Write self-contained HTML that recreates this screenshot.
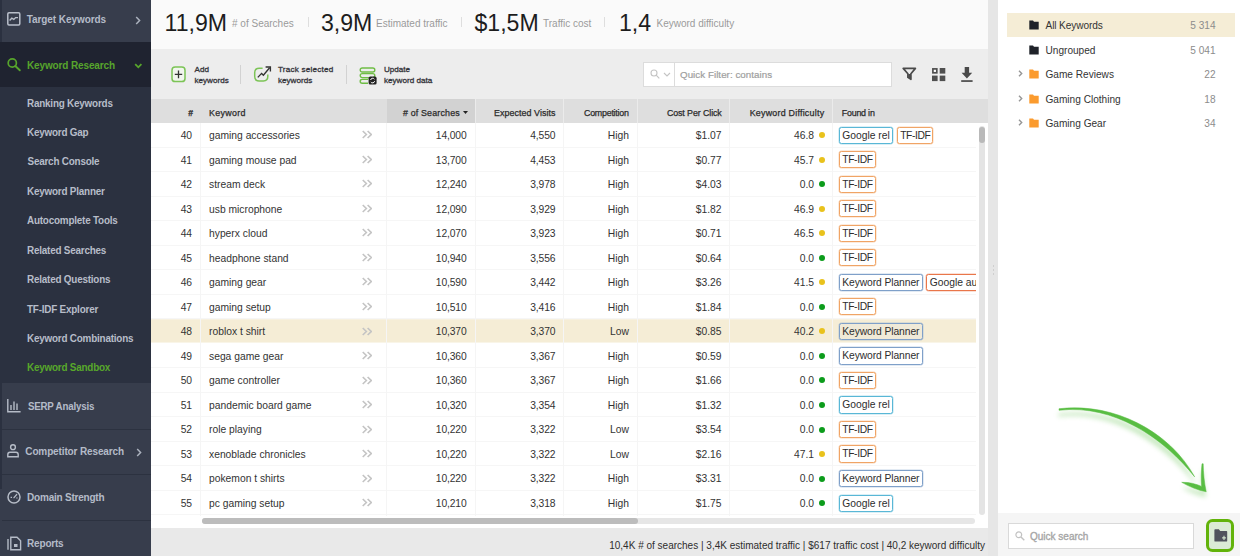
<!DOCTYPE html>
<html lang="en">
<head>
<meta charset="utf-8">
<title>Keyword Sandbox</title>
<style>
*{box-sizing:border-box;margin:0;padding:0}
html,body{width:1240px;height:556px;overflow:hidden;background:#fff}
body{font-family:"Liberation Sans",sans-serif;position:relative;color:#333}
.abs{position:absolute}
/* ---------- sidebar ---------- */
#side{position:absolute;left:0;top:0;width:151px;height:556px;background:#2b3140;overflow:hidden}
.top{position:absolute;left:0;width:151px;height:45.7px;background:#373d4c;border-left:2px solid #2b3140}
.top.line{border-top:1px solid #2c3240}
.top .lbl{position:absolute;top:50%;transform:translateY(-50%) scaleY(1.13);margin-top:-0.6px;font-weight:bold;font-size:10px;color:#b4bbc8;white-space:nowrap;letter-spacing:-0.16px}
.top.act{background:#1f2330;border-left-color:#1f2330;height:44.9px}
.top.act .lbl{color:#57a52c}
.top svg{position:absolute}
.sub{position:absolute;left:27px;font-weight:bold;font-size:9.9px;color:#b7bdc9;white-space:nowrap;transform:translateY(-50%) scaleY(1.13);margin-top:-0.2px;letter-spacing:-0.2px}
.sub.on{color:#58a82b}
/* ---------- main ---------- */
#stats{position:absolute;left:151px;top:0;width:837px;height:49px;background:#fafafa}
.big{position:absolute;top:10.1px;font-size:23.1px;color:#1d1d1d;white-space:nowrap;line-height:26px}
.sm{position:absolute;top:17.9px;font-size:10px;color:#9a9a9a;white-space:nowrap;line-height:12px}
.vs{position:absolute;top:17px;width:1px;height:10px;background:#dedede}
#tool{position:absolute;left:151px;top:49px;width:837px;height:50px;background:#ededed}
.tl{position:absolute;font-size:8.1px;line-height:11.3px;color:#34343a;white-space:nowrap;top:14.9px;-webkit-text-stroke:0.3px #34343a}
.tsep{position:absolute;top:16px;width:1px;height:19px;background:#d2d2d2}
#filter{position:absolute;left:492px;top:13px;width:248.6px;height:25px;background:#fff;border:1px solid #dcdcdc}
#filter .dv{position:absolute;left:29.5px;top:0;width:1px;height:23px;background:#dcdcdc}
#filter .ph{position:absolute;left:36px;top:5.9px;font-size:9.75px;line-height:12px;color:#9e9e9e;white-space:nowrap;letter-spacing:0.05px;-webkit-text-stroke:0.2px #9e9e9e}
/* table */
#thead{position:absolute;left:151px;top:99px;width:837px;height:24px;background:#dedede}
.th{position:absolute;top:0;height:24px;line-height:28.4px;overflow:hidden;font-size:8.9px;color:#2b2b2b;white-space:nowrap;border-left:1px solid #ebebeb;-webkit-text-stroke:0.25px #2b2b2b}
.th.r{text-align:right}
.th.sorted{background:#d2d2d2;background-image:radial-gradient(#cbcbcb 35%,transparent 36%);background-size:2px 2px;border-left:0}
#tbody{position:absolute;left:151px;top:123px;width:837px;height:405px;background:#fff}
.row{position:absolute;left:151px;width:825px;height:24.53px;border-bottom:1px solid #f6f6f6;font-size:10.3px;line-height:26.4px;color:#333;white-space:nowrap;overflow:hidden}
.row.sel{border-bottom-color:transparent}
.row .hl{position:absolute;left:0;top:0;width:825px;height:25px}
.c{position:absolute;top:0;height:24.53px}
.c0{left:0;width:41.1px;text-align:right}
.c1{left:58px}
.ch{position:absolute;left:210.6px;top:7.3px;width:10.4px;height:9px}
.c2{left:236px;width:79.5px;text-align:right;letter-spacing:-0.14px}
.c3{left:324px;width:80.5px;text-align:right;letter-spacing:-0.1px}
.c4{left:412px;width:66px;text-align:right}
.c5{left:486px;width:84.5px;text-align:right}
.c6{left:578px;width:85px;text-align:right}
.dot{position:absolute;left:667.5px;top:9.2px;width:6px;height:6px;border-radius:50%}
.dot.y{background:#e9c21c}
.dot.g{background:#0c9c1b}
.tags{position:absolute;left:688px;top:3.6px;height:17.2px;white-space:nowrap;line-height:15px}
.tag{display:inline-block;vertical-align:top;height:17.2px;line-height:16.5px;padding:0 2.3px;border:1px solid #999;border-radius:2.5px;background:#fff;margin-right:3.8px;font-size:10.3px;color:#2d2d2d}
.sel .tag{background:#f0ead8}
.tag.g{border-color:#59b7d6;box-shadow:0 0 0 .5px rgba(89,183,214,.45)}
.tag.t{border-color:#f0a465;box-shadow:0 0 0 .5px rgba(240,164,101,.45);letter-spacing:-0.38px;padding-right:1.9px}
.tag.k{border-color:#7fa0c9;box-shadow:0 0 0 .5px rgba(127,160,201,.45);letter-spacing:-0.09px}
.tag.a{border-color:#e9764a;box-shadow:0 0 0 .5px rgba(233,118,74,.45)}
.vl{position:absolute;top:123px;width:1px;height:392.5px;background:#f5f5f5}
#status{position:absolute;left:151px;top:528px;width:837px;height:28px;background:#e9e9e9}
#status span{position:absolute;right:3px;top:12px;font-size:10px;line-height:12px;color:#2e2e2e;white-space:nowrap}
/* right */
#split{position:absolute;left:988px;top:0;width:10px;height:556px;background:#e6e6e6}
#right{position:absolute;left:998px;top:0;width:242px;height:556px;background:#fff}
.gr{position:absolute;left:8.5px;width:228.5px;height:23.6px;font-size:10.1px;line-height:26px;color:#333;white-space:nowrap}
.gr.on{background:#f5edd6}
.gr .nm{position:absolute;left:39px;top:0}
.gr .ct{position:absolute;right:19.5px;top:0;color:#8c8c8c}
.gr svg{position:absolute}
#rbot{position:absolute;left:0;top:513px;width:242px;height:43px;background:#f5f5f5}
#qs{position:absolute;left:10px;top:9.6px;width:186px;height:26.8px;background:#fff;border:1px solid #d9d9d9}
#qs span{position:absolute;left:21px;top:7.3px;font-size:10px;line-height:12px;color:#a6a6a6;white-space:nowrap;-webkit-text-stroke:0.35px #a6a6a6}
#addg{position:absolute;left:208.3px;top:5.6px;width:27.7px;height:33.3px;border:3px solid #62b30a;border-radius:6.5px;background:#dbebd5}
</style>
</head>
<body>

<!-- ================= SIDEBAR ================= -->
<div id="side">
  <div class="top" style="top:-3.7px">
    <svg style="left:5px;top:15.5px" width="14" height="14" viewBox="0 0 14 14"><rect x="0.8" y="0.8" width="12" height="12.2" rx="1.2" fill="none" stroke="#b9bfca" stroke-width="1.5"/><path d="M2.6 8.4 L4.8 6.2 L6.8 7.4 L8.6 5.6 L11 5.6" fill="none" stroke="#b9bfca" stroke-width="1.4"/></svg>
    <span class="lbl" style="left:24.7px;margin-top:-0.3px;letter-spacing:-0.07px">Target Keywords</span>
    <svg style="left:133px;top:19.5px" width="6" height="9" viewBox="0 0 6 9"><path d="M1.2 1 L4.6 4.5 L1.2 8" fill="none" stroke="#aab1bd" stroke-width="1.5"/></svg>
  </div>
  <div class="top act" style="top:42px">
    <svg style="left:5px;top:15px" width="15" height="15" viewBox="0 0 15 15"><circle cx="5.3" cy="6" r="4.1" fill="none" stroke="#57a52c" stroke-width="1.7"/><path d="M8.3 9 L12.8 13.3" stroke="#57a52c" stroke-width="1.9" stroke-linecap="round"/></svg>
    <span class="lbl" style="left:25px;margin-top:0.5px;letter-spacing:-0.13px">Keyword Research</span>
    <svg style="left:132.3px;top:20.8px" width="9" height="6" viewBox="0 0 9 6"><path d="M1.2 1.2 L4.3 4.3 L7.4 1.2" fill="none" stroke="#57a52c" stroke-width="1.8"/></svg>
  </div>

  <span class="sub" style="top:103px">Ranking Keywords</span>
  <span class="sub" style="top:132px">Keyword Gap</span>
  <span class="sub" style="top:161.5px;left:27.5px">Search Console</span>
  <span class="sub" style="top:191px">Keyword Planner</span>
  <span class="sub" style="top:220.5px">Autocomplete Tools</span>
  <span class="sub" style="top:250px">Related Searches</span>
  <span class="sub" style="top:279px">Related Questions</span>
  <span class="sub" style="top:309px">TF-IDF Explorer</span>
  <span class="sub" style="top:338px">Keyword Combinations</span>
  <span class="sub on" style="top:367.5px">Keyword Sandbox</span>

  <div class="top" style="top:383.3px">
    <svg style="left:5px;top:15.3px" width="14" height="14" viewBox="0 0 14 14"><path d="M0.8 0 V12.8 H13.6" fill="none" stroke="#b6bcc7" stroke-width="1.4"/><path d="M4 11 V6 M7 11 V2.5 M10 11 V4.5" stroke="#b6bcc7" stroke-width="1.4"/></svg>
    <span class="lbl" style="left:25.9px;font-size:9.75px;letter-spacing:-0.2px">SERP Analysis</span>
  </div>
  <div class="top line" style="top:428.5px">
    <svg style="left:5px;top:14.6px" width="13" height="14" viewBox="0 0 13 14"><circle cx="6" cy="3.2" r="2.4" fill="none" stroke="#b6bcc7" stroke-width="1.4"/><path d="M0.8 12.8 V10.4 Q0.8 8.2 3 8.2 H9 Q11.2 8.2 11.2 10.4 V12.8 Z" fill="none" stroke="#b6bcc7" stroke-width="1.4"/></svg>
    <span class="lbl" style="left:23.3px;letter-spacing:-0.13px">Competitor Research</span>
    <svg style="left:134.2px;top:18.8px" width="6" height="9" viewBox="0 0 6 9"><path d="M1.2 1 L4.6 4.5 L1.2 8" fill="none" stroke="#aab1bd" stroke-width="1.5"/></svg>
  </div>
  <div class="top line" style="top:474.3px">
    <svg style="left:5px;top:15px" width="14" height="14" viewBox="0 0 14 14"><circle cx="7" cy="7" r="6" fill="none" stroke="#b6bcc7" stroke-width="1.5"/><path d="M7 7.6 L9.6 4.6" stroke="#b6bcc7" stroke-width="1.4" stroke-linecap="round"/><path d="M3.6 7.4 H5 M9.2 8 H10.6" stroke="#b6bcc7" stroke-width="1.2"/></svg>
    <span class="lbl" style="left:25.1px;letter-spacing:-0.22px">Domain Strength</span>
  </div>
  <div class="top line" style="top:520.3px">
    <svg style="left:5px;top:14.5px" width="15" height="15" viewBox="0 0 15 15"><path d="M3.8 1.2 H10 L13.6 4.8 V13.8 H3.8 Z" fill="none" stroke="#b6bcc7" stroke-width="1.4"/><path d="M1 3 V13.8" stroke="#b6bcc7" stroke-width="1.4"/><path d="M7 8 H10.5 V11 H7 Z" fill="#b6bcc7"/></svg>
    <span class="lbl" style="left:25.1px;letter-spacing:-0.2px">Reports</span>
  </div>
  <i class="abs" style="left:0;top:488.5px;width:2px;height:68px;background:#373d4c"></i>
</div>

<!-- ================= STATS ================= -->
<div id="stats">
  <span class="big" style="left:13.5px">11,9M</span><span class="sm" style="left:81px"># of Searches</span>
  <i class="vs" style="left:156.5px"></i>
  <span class="big" style="left:170px">3,9M</span><span class="sm" style="left:225px">Estimated traffic</span>
  <i class="vs" style="left:310px"></i>
  <span class="big" style="left:323.5px">$1,5M</span><span class="sm" style="left:392px">Traffic cost</span>
  <i class="vs" style="left:453px"></i>
  <span class="big" style="left:468px">1,4</span><span class="sm" style="left:505.5px">Keyword difficulty</span>
</div>

<!-- ================= TOOLBAR ================= -->
<div id="tool">
  <svg class="abs" style="left:19.7px;top:17.4px" width="16" height="17" viewBox="0 0 16 17"><rect x="1" y="1" width="13" height="14.6" rx="3.2" fill="#f1f5ee" stroke="#7cc456" stroke-width="1.5"/><path d="M7.5 4.4 V12.2 M3.8 8.3 H11.2" stroke="#333" stroke-width="1.3"/></svg>
  <span class="tl" style="left:43.5px">Add<br>keywords</span>
  <i class="tsep" style="left:89px"></i>
  <svg class="abs" style="left:102px;top:16.4px" width="19" height="18" viewBox="0 0 19 18"><path d="M9.6 3.2 H6.2 Q1.7 3.2 1.7 7.6 V11.6 Q1.7 16 6.2 16 H10.4 Q14.8 16 14.8 11.6 V9.6" fill="none" stroke="#7cc456" stroke-width="1.5"/><path d="M4.8 12.4 L8.6 8.4 L10.4 10.2 L16.6 2.8" fill="none" stroke="#333" stroke-width="1.35"/><path d="M12.6 2 H17.4 V6.6" fill="none" stroke="#333" stroke-width="1.35"/></svg>
  <span class="tl" style="left:127px"><span style="letter-spacing:0.22px">Track selected</span><br>keywords</span>
  <i class="tsep" style="left:195px"></i>
  <svg class="abs" style="left:208px;top:17.5px" width="18" height="18" viewBox="0 0 18 18"><rect x="1.2" y="1" width="14.6" height="4" rx="2" fill="none" stroke="#6fbd45" stroke-width="1.4"/><rect x="1.2" y="6.6" width="14.6" height="4" rx="2" fill="none" stroke="#6fbd45" stroke-width="1.4"/><path d="M9 12.4 H3.2 Q1.2 12.4 1.2 14.3 Q1.2 16.2 3.2 16.2 H9" fill="none" stroke="#6fbd45" stroke-width="1.4"/><rect x="9.6" y="9.6" width="8" height="8" rx="1.6" fill="#222"/><path d="M11.6 13 A2.1 2.1 0 0 1 15.4 12.2 M15.6 14.2 A2.1 2.1 0 0 1 11.8 15" fill="none" stroke="#fff" stroke-width="1"/></svg>
  <span class="tl" style="left:233px">Update<br>keyword data</span>

  <div id="filter">
    <svg class="abs" style="left:6px;top:6px" width="10" height="10" viewBox="0 0 10 10"><circle cx="4" cy="4" r="3" fill="none" stroke="#c4c4c4" stroke-width="1.1"/><path d="M6.2 6.2 L9.3 9.3" stroke="#c4c4c4" stroke-width="1.2"/></svg>
    <svg class="abs" style="left:19px;top:9px" width="8" height="5" viewBox="0 0 8 5"><path d="M1 1 L4 4 L7 1" fill="none" stroke="#c4c4c4" stroke-width="1.1"/></svg>
    <i class="dv"></i>
    <span class="ph">Quick Filter: contains</span>
  </div>
  <!-- funnel -->
  <svg class="abs" style="left:751px;top:18.4px" width="15" height="14" viewBox="0 0 15 14"><path d="M1.2 1.4 H13.4 L8.9 6.8 V12.3 L5.9 10.4 V6.8 Z" fill="none" stroke="#4a4a4a" stroke-width="1.7" stroke-linejoin="round"/><path d="M6.2 7 H8.6 V11.8 L6.2 10.2 Z" fill="#4a4a4a"/></svg>
  <!-- grid -->
  <svg class="abs" style="left:781px;top:18.9px" width="14" height="14" viewBox="0 0 14 14"><rect x="0.9" y="0.9" width="3.9" height="3.9" fill="#fff" stroke="#4f4f4f" stroke-width="1.7"/><rect x="7.7" y="0" width="5.6" height="5.6" fill="#4f4f4f"/><rect x="0" y="7.6" width="5.6" height="5.5" fill="#4f4f4f"/><rect x="7.7" y="7.6" width="5.6" height="5.5" fill="#4f4f4f"/></svg>
  <!-- download -->
  <svg class="abs" style="left:809.6px;top:18px" width="12" height="15" viewBox="0 0 12 15"><path d="M3.7 0 H8.1 V5.8 H11.2 L5.9 11.6 L0.6 5.8 H3.7 Z" fill="#4a4a4a"/><rect x="0.2" y="13.2" width="11.4" height="1.7" fill="#4a4a4a"/></svg>
</div>

<!-- ================= TABLE ================= -->
<div id="thead">
  <span class="th r" style="left:0;width:49px;padding-right:7px;border-left:0;font-weight:bold;font-size:8.6px">#</span>
  <span class="th" style="left:49px;width:187px;padding-left:9px;border-left:0;letter-spacing:0.3px">Keyword</span>
  <span class="th r sorted" style="left:235.5px;width:88.5px;padding-right:7.5px;letter-spacing:0.17px"># of Searches <svg width="5" height="3" viewBox="0 0 5 3" style="vertical-align:2px"><path d="M0 0 H5 L2.5 3 Z" fill="#222"/></svg></span>
  <span class="th r" style="left:324px;width:88.5px;padding-right:8px;letter-spacing:0.06px">Expected Visits</span>
  <span class="th r" style="left:412px;width:74px;padding-right:8.3px;letter-spacing:-0.24px">Competition</span>
  <span class="th r" style="left:486px;width:92px;padding-right:7.3px;letter-spacing:-0.1px">Cost Per Click</span>
  <span class="th r" style="left:578px;width:103px;padding-right:7.7px;letter-spacing:0.24px">Keyword Difficulty</span>
  <span class="th" style="left:681px;width:156px;padding-left:8.7px;letter-spacing:-0.2px">Found in</span>
</div>
<div id="tbody"></div>
<div class="row" style="top:123.00px"><span class="c c0">40</span><span class="c c1">gaming accessories</span><svg class="ch" viewBox="0 0 10 8"><path d="M0.7 0.6 L4.2 4 L0.7 7.4 M5.4 0.6 L8.9 4 L5.4 7.4" fill="none" stroke="#c4c4c4" stroke-width="1.55"/></svg><span class="c c2">14,000</span><span class="c c3">4,550</span><span class="c c4">High</span><span class="c c5">$1.07</span><span class="c c6">46.8</span><i class="dot y"></i><span class="tags"><span class="tag g">Google rel</span><span class="tag t">TF-IDF</span></span></div>
<div class="row" style="top:147.53px"><span class="c c0">41</span><span class="c c1">gaming mouse pad</span><svg class="ch" viewBox="0 0 10 8"><path d="M0.7 0.6 L4.2 4 L0.7 7.4 M5.4 0.6 L8.9 4 L5.4 7.4" fill="none" stroke="#c4c4c4" stroke-width="1.55"/></svg><span class="c c2">13,700</span><span class="c c3">4,453</span><span class="c c4">High</span><span class="c c5">$0.77</span><span class="c c6">45.7</span><i class="dot y"></i><span class="tags"><span class="tag t">TF-IDF</span></span></div>
<div class="row" style="top:172.06px"><span class="c c0">42</span><span class="c c1">stream deck</span><svg class="ch" viewBox="0 0 10 8"><path d="M0.7 0.6 L4.2 4 L0.7 7.4 M5.4 0.6 L8.9 4 L5.4 7.4" fill="none" stroke="#c4c4c4" stroke-width="1.55"/></svg><span class="c c2">12,240</span><span class="c c3">3,978</span><span class="c c4">High</span><span class="c c5">$4.03</span><span class="c c6">0.0</span><i class="dot g"></i><span class="tags"><span class="tag t">TF-IDF</span></span></div>
<div class="row" style="top:196.59px"><span class="c c0">43</span><span class="c c1">usb microphone</span><svg class="ch" viewBox="0 0 10 8"><path d="M0.7 0.6 L4.2 4 L0.7 7.4 M5.4 0.6 L8.9 4 L5.4 7.4" fill="none" stroke="#c4c4c4" stroke-width="1.55"/></svg><span class="c c2">12,090</span><span class="c c3">3,929</span><span class="c c4">High</span><span class="c c5">$1.82</span><span class="c c6">46.9</span><i class="dot y"></i><span class="tags"><span class="tag t">TF-IDF</span></span></div>
<div class="row" style="top:221.12px"><span class="c c0">44</span><span class="c c1">hyperx cloud</span><svg class="ch" viewBox="0 0 10 8"><path d="M0.7 0.6 L4.2 4 L0.7 7.4 M5.4 0.6 L8.9 4 L5.4 7.4" fill="none" stroke="#c4c4c4" stroke-width="1.55"/></svg><span class="c c2">12,070</span><span class="c c3">3,923</span><span class="c c4">High</span><span class="c c5">$0.71</span><span class="c c6">46.5</span><i class="dot y"></i><span class="tags"><span class="tag t">TF-IDF</span></span></div>
<div class="row" style="top:245.65px"><span class="c c0">45</span><span class="c c1">headphone stand</span><svg class="ch" viewBox="0 0 10 8"><path d="M0.7 0.6 L4.2 4 L0.7 7.4 M5.4 0.6 L8.9 4 L5.4 7.4" fill="none" stroke="#c4c4c4" stroke-width="1.55"/></svg><span class="c c2">10,940</span><span class="c c3">3,556</span><span class="c c4">High</span><span class="c c5">$0.64</span><span class="c c6">0.0</span><i class="dot g"></i><span class="tags"><span class="tag t">TF-IDF</span></span></div>
<div class="row" style="top:270.18px"><span class="c c0">46</span><span class="c c1">gaming gear</span><svg class="ch" viewBox="0 0 10 8"><path d="M0.7 0.6 L4.2 4 L0.7 7.4 M5.4 0.6 L8.9 4 L5.4 7.4" fill="none" stroke="#c4c4c4" stroke-width="1.55"/></svg><span class="c c2">10,590</span><span class="c c3">3,442</span><span class="c c4">High</span><span class="c c5">$3.26</span><span class="c c6">41.5</span><i class="dot y"></i><span class="tags"><span class="tag k">Keyword Planner</span><span class="tag a">Google autocomplete</span></span></div>
<div class="row" style="top:294.71px"><span class="c c0">47</span><span class="c c1">gaming setup</span><svg class="ch" viewBox="0 0 10 8"><path d="M0.7 0.6 L4.2 4 L0.7 7.4 M5.4 0.6 L8.9 4 L5.4 7.4" fill="none" stroke="#c4c4c4" stroke-width="1.55"/></svg><span class="c c2">10,510</span><span class="c c3">3,416</span><span class="c c4">High</span><span class="c c5">$1.84</span><span class="c c6">0.0</span><i class="dot g"></i><span class="tags"><span class="tag t">TF-IDF</span></span></div>
<div class="row sel" style="top:319.24px"><svg class="hl" viewBox="0 0 825 25" preserveAspectRatio="none"><rect x="0" y="0.25" width="825" height="23.3" fill="#f5edd6"/></svg><span class="c c0">48</span><span class="c c1">roblox t shirt</span><svg class="ch" viewBox="0 0 10 8"><path d="M0.7 0.6 L4.2 4 L0.7 7.4 M5.4 0.6 L8.9 4 L5.4 7.4" fill="none" stroke="#c4c4c4" stroke-width="1.55"/></svg><span class="c c2">10,370</span><span class="c c3">3,370</span><span class="c c4">Low</span><span class="c c5">$0.85</span><span class="c c6">40.2</span><i class="dot y"></i><span class="tags"><span class="tag k">Keyword Planner</span></span></div>
<div class="row" style="top:343.77px"><span class="c c0">49</span><span class="c c1">sega game gear</span><svg class="ch" viewBox="0 0 10 8"><path d="M0.7 0.6 L4.2 4 L0.7 7.4 M5.4 0.6 L8.9 4 L5.4 7.4" fill="none" stroke="#c4c4c4" stroke-width="1.55"/></svg><span class="c c2">10,360</span><span class="c c3">3,367</span><span class="c c4">High</span><span class="c c5">$0.59</span><span class="c c6">0.0</span><i class="dot g"></i><span class="tags"><span class="tag k">Keyword Planner</span></span></div>
<div class="row" style="top:368.30px"><span class="c c0">50</span><span class="c c1">game controller</span><svg class="ch" viewBox="0 0 10 8"><path d="M0.7 0.6 L4.2 4 L0.7 7.4 M5.4 0.6 L8.9 4 L5.4 7.4" fill="none" stroke="#c4c4c4" stroke-width="1.55"/></svg><span class="c c2">10,360</span><span class="c c3">3,367</span><span class="c c4">High</span><span class="c c5">$1.66</span><span class="c c6">0.0</span><i class="dot g"></i><span class="tags"><span class="tag t">TF-IDF</span></span></div>
<div class="row" style="top:392.83px"><span class="c c0">51</span><span class="c c1">pandemic board game</span><svg class="ch" viewBox="0 0 10 8"><path d="M0.7 0.6 L4.2 4 L0.7 7.4 M5.4 0.6 L8.9 4 L5.4 7.4" fill="none" stroke="#c4c4c4" stroke-width="1.55"/></svg><span class="c c2">10,320</span><span class="c c3">3,354</span><span class="c c4">High</span><span class="c c5">$1.32</span><span class="c c6">0.0</span><i class="dot g"></i><span class="tags"><span class="tag g">Google rel</span></span></div>
<div class="row" style="top:417.36px"><span class="c c0">52</span><span class="c c1">role playing</span><svg class="ch" viewBox="0 0 10 8"><path d="M0.7 0.6 L4.2 4 L0.7 7.4 M5.4 0.6 L8.9 4 L5.4 7.4" fill="none" stroke="#c4c4c4" stroke-width="1.55"/></svg><span class="c c2">10,220</span><span class="c c3">3,322</span><span class="c c4">Low</span><span class="c c5">$3.54</span><span class="c c6">0.0</span><i class="dot g"></i><span class="tags"><span class="tag t">TF-IDF</span></span></div>
<div class="row" style="top:441.89px"><span class="c c0">53</span><span class="c c1">xenoblade chronicles</span><svg class="ch" viewBox="0 0 10 8"><path d="M0.7 0.6 L4.2 4 L0.7 7.4 M5.4 0.6 L8.9 4 L5.4 7.4" fill="none" stroke="#c4c4c4" stroke-width="1.55"/></svg><span class="c c2">10,220</span><span class="c c3">3,322</span><span class="c c4">Low</span><span class="c c5">$2.16</span><span class="c c6">47.1</span><i class="dot y"></i><span class="tags"><span class="tag t">TF-IDF</span></span></div>
<div class="row" style="top:466.42px"><span class="c c0">54</span><span class="c c1">pokemon t shirts</span><svg class="ch" viewBox="0 0 10 8"><path d="M0.7 0.6 L4.2 4 L0.7 7.4 M5.4 0.6 L8.9 4 L5.4 7.4" fill="none" stroke="#c4c4c4" stroke-width="1.55"/></svg><span class="c c2">10,220</span><span class="c c3">3,322</span><span class="c c4">High</span><span class="c c5">$3.31</span><span class="c c6">0.0</span><i class="dot g"></i><span class="tags"><span class="tag k">Keyword Planner</span></span></div>
<div class="row" style="top:490.95px"><span class="c c0">55</span><span class="c c1">pc gaming setup</span><svg class="ch" viewBox="0 0 10 8"><path d="M0.7 0.6 L4.2 4 L0.7 7.4 M5.4 0.6 L8.9 4 L5.4 7.4" fill="none" stroke="#c4c4c4" stroke-width="1.55"/></svg><span class="c c2">10,210</span><span class="c c3">3,318</span><span class="c c4">High</span><span class="c c5">$1.75</span><span class="c c6">0.0</span><i class="dot g"></i><span class="tags"><span class="tag g">Google rel</span></span></div>
<i class="vl" style="left:200px"></i>
<i class="vl" style="left:386px"></i>
<i class="vl" style="left:475px"></i>
<i class="vl" style="left:563px"></i>
<i class="vl" style="left:637px"></i>
<i class="vl" style="left:729px"></i>
<i class="vl" style="left:832px"></i>
<!-- v scrollbar -->
<div class="abs" style="left:979px;top:126px;width:5.5px;height:389px;border-radius:3px;background:#e4e4e4"></div>
<div class="abs" style="left:979px;top:126.5px;width:5.5px;height:16.5px;border-radius:3px;background:#b9b9b9"></div>
<!-- h scrollbar -->
<div class="abs" style="left:202px;top:518.4px;width:773px;height:5.8px;border-radius:3px;background:#e6e6e6"></div>
<div class="abs" style="left:202px;top:518.4px;width:436px;height:5.8px;border-radius:3px;background:#bcbcbc"></div>

<div id="status"><span>10,4K # of searches | 3,4K estimated traffic | $617 traffic cost | 40,2 keyword difficulty</span></div>

<!-- ================= RIGHT PANEL ================= -->
<div id="split">
  <i class="abs" style="left:4.5px;top:265px;width:1.5px;height:1.5px;background:#cfcfcf"></i>
  <i class="abs" style="left:4.5px;top:269px;width:1.5px;height:1.5px;background:#cfcfcf"></i>
  <i class="abs" style="left:4.5px;top:273px;width:1.5px;height:1.5px;background:#cfcfcf"></i>
</div>
<div id="right">
  <div class="gr on" style="top:13px"><svg style="left:22.6px;top:7px" width="10" height="10" viewBox="0 0 10 10"><path d="M0.3 0.6 H4 L5 1.8 H9.7 V9.6 H0.3 Z" fill="#1f2229"/></svg><span class="nm" style="letter-spacing:-0.1px">All Keywords</span><span class="ct">5 314</span></div>
  <div class="gr" style="top:37.5px"><svg style="left:22.6px;top:7px" width="10" height="10" viewBox="0 0 10 10"><path d="M0.3 0.6 H4 L5 1.8 H9.7 V9.6 H0.3 Z" fill="#1f2229"/></svg><span class="nm">Ungrouped</span><span class="ct">5 041</span></div>
  <div class="gr" style="top:62px"><svg style="left:11.3px;top:8.1px" width="5" height="7" viewBox="0 0 5 7"><path d="M1 0.8 L3.7 3.5 L1 6.2" fill="none" stroke="#969696" stroke-width="1.4"/></svg><svg style="left:22.6px;top:7px" width="10" height="10" viewBox="0 0 10 10"><path d="M0.3 0.6 H4 L5 1.8 H9.7 V9.6 H0.3 Z" fill="#fb9b2e"/></svg><span class="nm">Game Reviews</span><span class="ct">22</span></div>
  <div class="gr" style="top:86.5px"><svg style="left:11.3px;top:8.1px" width="5" height="7" viewBox="0 0 5 7"><path d="M1 0.8 L3.7 3.5 L1 6.2" fill="none" stroke="#969696" stroke-width="1.4"/></svg><svg style="left:22.6px;top:7px" width="10" height="10" viewBox="0 0 10 10"><path d="M0.3 0.6 H4 L5 1.8 H9.7 V9.6 H0.3 Z" fill="#fb9b2e"/></svg><span class="nm">Gaming Clothing</span><span class="ct">18</span></div>
  <div class="gr" style="top:111px"><svg style="left:11.3px;top:8.1px" width="5" height="7" viewBox="0 0 5 7"><path d="M1 0.8 L3.7 3.5 L1 6.2" fill="none" stroke="#969696" stroke-width="1.4"/></svg><svg style="left:22.6px;top:7px" width="10" height="10" viewBox="0 0 10 10"><path d="M0.3 0.6 H4 L5 1.8 H9.7 V9.6 H0.3 Z" fill="#fb9b2e"/></svg><span class="nm">Gaming Gear</span><span class="ct">34</span></div>

  <!-- arrow -->
  <svg class="abs" style="left:40px;top:390px" width="200" height="125" viewBox="1038 390 200 125">
    <defs><filter id="bl" x="-20%" y="-30%" width="140%" height="180%"><feGaussianBlur stdDeviation="2.6"/></filter></defs>
    <g filter="url(#bl)" opacity=".34" transform="translate(0,5.5)">
      <path d="M1059 408.7 C1114 402.2 1169.6 431.4 1194.6 476.8 C1164 438.2 1114 403.9 1059 410.3 Z" fill="#58bd42" stroke="#58bd42" stroke-width="1.5"/>
      <path d="M1181.7 482.3 C1189 482 1196 484 1201.6 486.4 C1201 479 1201.2 471 1202 463.8 L1203.2 463.8 C1203.3 473 1204.3 483 1206.2 491.8 C1198 490.2 1189 486.6 1181.7 482.3 Z" fill="#58bd42"/>
    </g>
    <path d="M1059 408.7 C1114 402.2 1169.6 431.4 1194.6 476.8 C1164 438.2 1114 403.9 1059 410.3 Z" fill="#58bd42" stroke="#58bd42" stroke-width="0.5" stroke-linejoin="round"/>
    <path d="M1181.7 482.3 C1189 482 1196 484 1201.6 486.4 C1201 479 1201.2 471 1202 463.8 L1203.2 463.8 C1203.3 473 1204.3 483 1206.2 491.8 C1198 490.2 1189 486.6 1181.7 482.3 Z" fill="#58bd42" stroke="#58bd42" stroke-width="0.5" stroke-linejoin="round"/>
  </svg>

  <div id="rbot">
    <div id="qs"><svg class="abs" style="left:5.8px;top:7.6px" width="10" height="10" viewBox="0 0 10 10"><circle cx="3.8" cy="3.8" r="2.9" fill="none" stroke="#c2c2c2" stroke-width="1.2"/><path d="M6 6 L9.3 9.3" stroke="#c2c2c2" stroke-width="1.4"/></svg><span>Quick search</span></div>
    <div id="addg"><svg class="abs" style="left:4.8px;top:7.8px" width="13.6" height="12.8" viewBox="0 0 14 12" preserveAspectRatio="none"><path d="M0.4 1 Q0.4 0.2 1.2 0.2 H5 L6.4 1.8 H12.8 Q13.6 1.8 13.6 2.6 V11 Q13.6 11.8 12.8 11.8 H1.2 Q0.4 11.8 0.4 11 Z" fill="#50535c"/><path d="M10.3 6.4 V10.2 M8.4 8.3 H12.2" stroke="#d5e8cf" stroke-width="1.1"/></svg></div>
  </div>
</div>

</body>
</html>
